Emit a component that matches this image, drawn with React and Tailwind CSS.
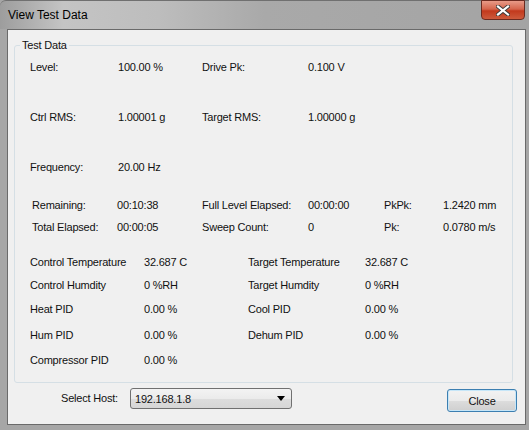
import React from "react";

function Row({ cells, className = "" }) {
  return (
    <div className={"flex h-[14px] leading-[14px] " + className}>
      {cells.map(([w, t], i) => (
        <div key={i} className={"shrink-0 whitespace-nowrap " + w}>
          {t}
        </div>
      ))}
    </div>
  );
}

export default function App() {
  return (
    <div className="w-[529px] h-[430px] overflow-hidden bg-[#a6a6a6] flex flex-col font-['Liberation_Sans',Arial,sans-serif] text-[11px] tracking-[-0.2px] text-[#111]">
      {/* Title bar */}
      <div className="h-[29px] shrink-0 flex items-start rounded-tl-[6px] border-t border-[#707070] bg-[linear-gradient(90deg,#9d9d9d_0%,#c4c4c4_12%,#bdbdbd_30%,#a9a9a9_50%,#a4a4a4_100%)]">
        <span className="mt-[6px] ml-[8px] text-[12px] tracking-normal leading-[16px] text-black">View Test Data</span>
        <div className="ml-auto mr-[4px] -mt-px w-[44px] h-[20px] rounded-b-[4px] border border-[#6b2a20] bg-[linear-gradient(180deg,#e89a88_0%,#d5654c_45%,#c2391d_55%,#cd5a3c_100%)] flex items-center justify-center">
          <svg width="14" height="11" viewBox="0 0 14 11">
            <path d="M2 1.5 L12 9.5 M12 1.5 L2 9.5" stroke="#3a3a3a" strokeWidth="4" strokeLinecap="square" />
            <path d="M2 1.5 L12 9.5 M12 1.5 L2 9.5" stroke="#ffffff" strokeWidth="2.2" strokeLinecap="square" />
          </svg>
        </div>
      </div>

      {/* Client area */}
      <div className="ml-[7px] mr-[3px] h-[396px] shrink-0 border border-[#6a6a6a] bg-[#f0f0f0] flex flex-col">
        {/* Group box */}
        <div className="relative mt-[15px] ml-[6px] w-[499px] border border-[#d5dfe5] rounded-[3px] pl-[15px] pt-[14px] pb-[15px]">
          <span className="absolute -top-[8px] left-[5px] px-[2px] bg-[#f0f0f0] leading-[14px]">Test Data</span>

          <Row cells={[["w-[88px]", "Level:"], ["w-[84px]", "100.00 %"], ["w-[106px]", "Drive Pk:"], ["", "0.100 V"]]} />
          <Row className="mt-[36px]" cells={[["w-[88px]", "Ctrl RMS:"], ["w-[84px]", "1.00001 g"], ["w-[106px]", "Target RMS:"], ["", "1.00000 g"]]} />
          <Row className="mt-[36px]" cells={[["w-[88px]", "Frequency:"], ["", "20.00 Hz"]]} />

          <Row className="mt-[24px] pl-[2px]" cells={[["w-[85px]", "Remaining:"], ["w-[85px]", "00:10:38"], ["w-[106px]", "Full Level Elapsed:"], ["w-[76px]", "00:00:00"], ["w-[59px]", "PkPk:"], ["", "1.2420 mm"]]} />
          <Row className="mt-[8px] pl-[2px]" cells={[["w-[85px]", "Total Elapsed:"], ["w-[85px]", "00:00:05"], ["w-[106px]", "Sweep Count:"], ["w-[76px]", "0"], ["w-[59px]", "Pk:"], ["", "0.0780 m/s"]]} />

          <Row className="mt-[21px]" cells={[["w-[114px]", "Control Temperature"], ["w-[104px]", "32.687 C"], ["w-[117px]", "Target Temperature"], ["", "32.687 C"]]} />
          <Row className="mt-[9px]" cells={[["w-[114px]", "Control Humdity"], ["w-[104px]", "0 %RH"], ["w-[117px]", "Target Humdity"], ["", "0 %RH"]]} />
          <Row className="mt-[10px]" cells={[["w-[114px]", "Heat PID"], ["w-[104px]", "0.00 %"], ["w-[117px]", "Cool PID"], ["", "0.00 %"]]} />
          <Row className="mt-[12px]" cells={[["w-[114px]", "Hum PID"], ["w-[104px]", "0.00 %"], ["w-[117px]", "Dehum PID"], ["", "0.00 %"]]} />
          <Row className="mt-[11px]" cells={[["w-[114px]", "Compressor PID"], ["", "0.00 %"]]} />
        </div>

        {/* Bottom row */}
        <div className="mt-[5px] flex items-start">
          <div className="ml-[53px] w-[69px] h-[21px] leading-[21px] whitespace-nowrap">Select Host:</div>
          <div className="w-[162px] h-[21px] rounded-[3px] border border-[#707070] bg-[linear-gradient(180deg,#f3f3f3_0%,#ebebeb_50%,#dddddd_51%,#d6d6d6_100%)] flex items-center pl-[4px] pr-[6px]">
            <span className="leading-[14px]">192.168.1.8</span>
            <svg className="ml-auto" width="8" height="5" viewBox="0 0 8 5">
              <path d="M0 0 H8 L4 5 Z" fill="#000" />
            </svg>
          </div>
          <div className="ml-auto mr-[8px] mt-[1px] w-[70px] h-[23px] rounded-[3px] border border-[#3c7fb1] shadow-[inset_0_0_0_1px_#c6e6f8] bg-[linear-gradient(180deg,#f2f2f2_0%,#ebebeb_50%,#dddddd_51%,#cfcfcf_100%)] flex items-center justify-center">
            <span className="leading-[14px]">Close</span>
          </div>
        </div>
      </div>
    </div>
  );
}
